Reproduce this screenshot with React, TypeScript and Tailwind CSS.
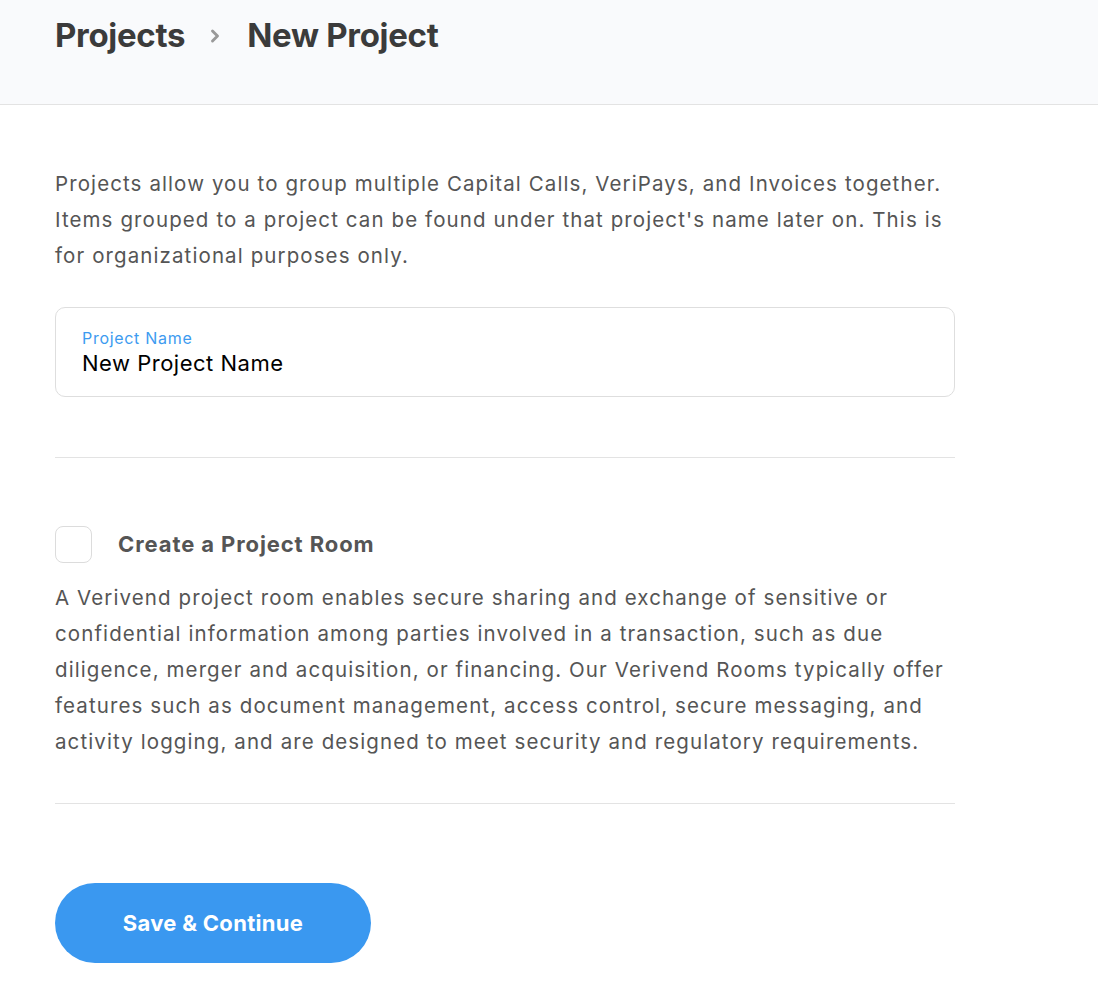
import React, { useState } from 'react';

export default function App() {
  const [name, setName] = useState('New Project Name');
  const [room, setRoom] = useState(false);

  return (
    <div className="min-h-screen bg-white text-[#555555] font-['Inter',sans-serif]">
      <header className="h-[105px] border-b border-[#e3e3e3] bg-[#f9fafc] px-[55px] pt-[11px]">
        <div className="flex items-center text-[33px] font-bold tracking-[-0.3px] text-[#3b3b3b]">
          <span>Projects</span>
          <svg className="ml-[20px] mr-[22px] h-[20px] w-[20px] text-[#999999]" viewBox="0 0 24 24" fill="none" stroke="currentColor" strokeWidth="3.5" strokeLinecap="round" strokeLinejoin="round">
            <path d="M9 6l6 6-6 6" />
          </svg>
          <span>New Project</span>
        </div>
      </header>

      <main className="ml-[55px] w-[900px]">
        <p className="mt-[61px] w-[910px] text-[20.5px] leading-[36px] tracking-[1.1px]">
          Projects allow you to group multiple Capital Calls, VeriPays, and Invoices together. Items grouped to a project can be found under that project's name later on. This is for organizational purposes only.
        </p>

        <label className="mt-[33px] flex h-[90px] flex-col justify-center rounded-[10px] border border-[#dedede] px-[26px]">
          <span className="text-[16px] leading-[20px] tracking-[0.7px] text-[#3d9bf0]">Project Name</span>
          <input
            value={name}
            onChange={(e) => setName(e.target.value)}
            className="mt-[1px] bg-transparent text-[22px] leading-[28px] tracking-[0.5px] text-black outline-none"
          />
        </label>

        <hr className="mt-[60px] border-t border-[#e3e3e3]" />

        <div className="mt-[68px] flex items-center gap-[26px]">
          <button
            type="button"
            onClick={() => setRoom(!room)}
            className={`h-[37px] w-[37px] rounded-[8px] border border-[#dcdcdc] ${room ? 'bg-[#3a98f0]' : 'bg-white'}`}
          />
          <span className="text-[22px] font-bold tracking-[0.9px] text-[#555555]">Create a Project Room</span>
        </div>

        <p className="mt-[17px] w-[910px] text-[20.5px] leading-[36px] tracking-[1.1px]">
          A Verivend project room enables secure sharing and exchange of sensitive or confidential information among parties involved in a transaction, such as due diligence, merger and acquisition, or financing. Our Verivend Rooms typically offer features such as document management, access control, secure messaging, and activity logging, and are designed to meet security and regulatory requirements.
        </p>

        <hr className="mt-[43px] border-t border-[#e3e3e3]" />

        <button
          type="button"
          className="mt-[79px] h-[80px] w-[316px] rounded-full bg-[#3a98f0] text-[22px] font-bold tracking-[0.3px] text-white"
        >
          Save &amp; Continue
        </button>
      </main>
    </div>
  );
}
